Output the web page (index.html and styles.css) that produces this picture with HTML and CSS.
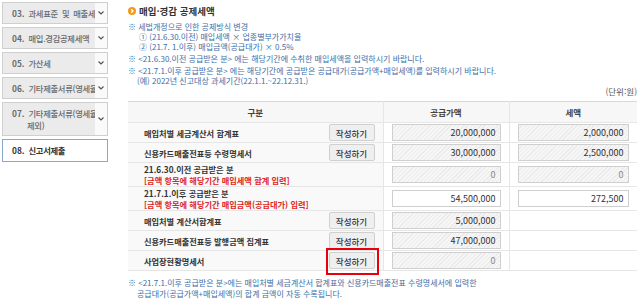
FILE: index.html
```html
<!DOCTYPE html>
<html lang="ko">
<head>
<meta charset="utf-8">
<link rel="stylesheet" href="styles.css">
</head>
<body>
<div class="page">
  <nav class="sidebar">
    <div class="step"><span class="step-label"><b>03.</b> 과세표준 및 매출세액</span><span class="step-arrow"><svg width="6" height="4" viewBox="0 0 6 4"><path d="M0.5 0.5 L3 3 L5.5 0.5" fill="none" stroke="#555" stroke-width="1.2"/></svg></span></div>
    <div class="step"><span class="step-label"><b>04.</b> 매입.경감공제세액</span><span class="step-arrow"><svg width="6" height="4" viewBox="0 0 6 4"><path d="M0.5 0.5 L3 3 L5.5 0.5" fill="none" stroke="#555" stroke-width="1.2"/></svg></span></div>
    <div class="step"><span class="step-label"><b>05.</b> 가산세</span><span class="step-arrow"><svg width="6" height="4" viewBox="0 0 6 4"><path d="M0.5 0.5 L3 3 L5.5 0.5" fill="none" stroke="#555" stroke-width="1.2"/></svg></span></div>
    <div class="step"><span class="step-label"><b>06.</b> 기타제출서류(영세율 제외)</span><span class="step-arrow"><svg width="6" height="4" viewBox="0 0 6 4"><path d="M0.5 0.5 L3 3 L5.5 0.5" fill="none" stroke="#555" stroke-width="1.2"/></svg></span></div>
    <div class="step step-tall"><span class="step-label step-wrap"><b>07.</b> 기타제출서류(영세율<br><span class="wrap-indent">제외)</span></span><span class="step-arrow"><svg width="6" height="4" viewBox="0 0 6 4"><path d="M0.5 0.5 L3 3 L5.5 0.5" fill="none" stroke="#555" stroke-width="1.2"/></svg></span></div>
    <div class="step step-active"><span class="step-label"><b>08.</b> 신고서제출</span></div>
  </nav>
  <main class="main">
    <h2 class="title"><span class="title-icon"><svg width="8" height="8" viewBox="0 0 8 8"><circle cx="4" cy="4" r="4" fill="#f39a1e"/><path d="M3.2 2.2 L5 4 L3.2 5.8" fill="none" stroke="#fff" stroke-width="1.3"/></svg></span>매입·경감 공제세액</h2>
    <div class="notes">
      <p>※ 세법개정으로 인한 공제방식 변경</p>
      <p class="indent">① (21.6.30.이전) 매입세액 × 업종별부가가치율</p>
      <p class="indent">② (21.7. 1.이후) 매입금액(공급대가) × 0.5%</p>
      <p class="gap">※ &lt;21.6.30.이전 공급받은 분&gt; 에는 해당기간에 수취한 매입세액을 입력하시기 바랍니다.</p>
      <p class="gap">※ &lt;21.7.1.이후 공급받은 분&gt; 에는 해당기간에 공급받은 공급대가(공급가액+매입세액)를 입력하시기 바랍니다.</p>
      <p class="indent-s">(예) 2022년 신고대상 과세기간(22.1.1.~22.12.31.)</p>
    </div>
    <div class="unit">(단위:원)</div>
    <table class="grid">
      <colgroup><col class="c1"><col class="c2"><col class="c3"></colgroup>
      <thead>
        <tr><th>구분</th><th>공급가액</th><th>세액</th></tr>
      </thead>
      <tbody>
        <tr>
          <td class="label"><div class="label-row"><span>매입처별 세금계산서 합계표</span><button class="btn">작성하기</button></div></td>
          <td><div class="field ro">20,000,000</div></td>
          <td><div class="field ro">2,000,000</div></td>
        </tr>
        <tr>
          <td class="label"><div class="label-row"><span>신용카드매출전표등 수령명세서</span><button class="btn">작성하기</button></div></td>
          <td><div class="field ro">30,000,000</div></td>
          <td><div class="field ro">2,500,000</div></td>
        </tr>
        <tr class="two">
          <td class="label"><div class="label-two"><span>21.6.30.이전 공급받은 분</span><span class="red">[금액 항목에 해당기간 매입세액 합계 입력]</span></div></td>
          <td><div class="field ro zero">0</div></td>
          <td><div class="field ro zero">0</div></td>
        </tr>
        <tr class="two">
          <td class="label"><div class="label-two"><span>21.7.1.이후 공급받은 분</span><span class="red">[금액 항목에 해당기간 매입금액(공급대가) 입력]</span></div></td>
          <td><div class="field">54,500,000</div></td>
          <td><div class="field">272,500</div></td>
        </tr>
        <tr>
          <td class="label"><div class="label-row"><span>매입처별 계산서합계표</span><button class="btn">작성하기</button></div></td>
          <td><div class="field ro">5,000,000</div></td>
          <td></td>
        </tr>
        <tr>
          <td class="label"><div class="label-row"><span>신용카드매출전표등 발행금액 집계표</span><button class="btn">작성하기</button></div></td>
          <td><div class="field ro">47,000,000</div></td>
          <td></td>
        </tr>
        <tr>
          <td class="label"><div class="label-row"><span>사업장현황명세서</span><button class="btn btn-marked">작성하기</button></div></td>
          <td><div class="field ro zero">0</div></td>
          <td></td>
        </tr>
      </tbody>
    </table>
    <div class="foot">
      <p>※ &lt;21.7.1.이후 공급받은 분&gt;에는 매입처별 세금계산서 합계표와 신용카드매출전표 수령명세서에 입력한</p>
      <p class="indent-s">공급대가(공급가액+매입세액)의 합계 금액이 자동 수록됩니다.</p>
    </div>
  </main>
</div>
</body>
</html>
```
FILE: styles.css
```css
* { box-sizing: border-box; }
html, body { margin: 0; padding: 0; background: #fff; }
body {
  font-family: "Noto Sans CJK KR", "Noto Sans", sans-serif;
  color: #333;
  width: 643px;
  height: 306px;
  overflow: hidden;
}
.page {
  display: flex;
  padding: 2px 6px 0 2px;
}
.sidebar {
  width: 106px;
  flex: none;
  display: flex;
  flex-direction: column;
  gap: 3px;
}
.step {
  display: flex;
  height: 22px;
  border: 1px solid #cfcfcf;
  background: #fafafa;
}
.step-label {
  flex: 1;
  min-width: 0;
  background: #ebebeb;
  color: #6a6a6a;
  font-size: 8.3px;
  font-weight: 500;
  letter-spacing: -0.3px;
  word-spacing: 2px;
  line-height: 20px;
  padding-left: 9px;
  white-space: nowrap;
  overflow: hidden;
}
.step-label b { font-weight: 700; letter-spacing: 0; }
.step-arrow {
  width: 12px;
  flex: none;
  display: flex;
  align-items: center;
  justify-content: center;
}
.step-tall { height: 34px; }
.step-wrap { line-height: 12px; padding-top: 4px; }
.wrap-indent { padding-left: 15px; }
.step-active {
  border-color: #8aa6cf;
  background: #fff;
  height: 23px;
}
.step-active .step-label { background: #fff; color: #333; font-weight: 700; }

.main {
  flex: 1;
  margin-left: 20px;
  min-width: 0;
}
.title {
  margin: 3px 0 0;
  font-size: 9.5px;
  font-weight: 700;
  color: #333;
  display: flex;
  align-items: center;
  gap: 3px;
  height: 12px;
}
.title-icon { display: flex; }
.notes { margin-top: 5px; color: #3d6ea8; font-size: 8px; line-height: 10px; }
.notes p, .foot p { margin: 0; white-space: nowrap; }
.indent { padding-left: 11px; }
.indent-s { padding-left: 9px; }
.gap { margin-top: 2px !important; }
.unit {
  text-align: right;
  font-size: 8.5px;
  color: #555;
  margin-top: 0;
  line-height: 10px;
}
.grid {
  margin-top: 5px;
  width: 509px;
  border-collapse: collapse;
  table-layout: fixed;
  border-top: 1px solid #d8d8d8;
}
.c1 { width: 255px; }
.c2 { width: 126px; }
.c3 { width: 128px; }
.grid th {
  height: 21px;
  padding: 0;
  background: #f7f7f7;
  font-size: 8.5px;
  font-weight: 700;
  color: #444;
  border-bottom: 1px solid #e6e6e6;
  border-left: 1px solid #e6e6e6;
}
.grid th:first-child { border-left: 0; }
.grid td {
  height: 20px;
  padding: 0;
  border-bottom: 1px solid #e6e6e6;
  border-left: 1px solid #e6e6e6;
  vertical-align: middle;
}
.grid td.label { border-left: 0; background: #f9f9f9; padding: 0 8px 0 16px; font-size: 8.2px; font-weight: 700; color: #333; }
.grid tr.two td { height: 24px; }
.label-row { display: flex; align-items: center; justify-content: space-between; }
.label-two { display: flex; flex-direction: column; line-height: 10.5px; }
.red { color: #e0261f; }
.btn {
  position: relative;
  width: 46px;
  height: 17px;
  padding: 0;
  border: 1px solid #d0d0d0;
  border-radius: 2px;
  background: #efefef;
  font-family: inherit;
  font-size: 8.5px;
  font-weight: 500;
  color: #333;
}
.btn-marked::after {
  content: "";
  position: absolute;
  left: -4px;
  top: -5px;
  right: -5px;
  bottom: -7px;
  border: 2px solid #e8000b;
}
.field {
  width: 109px;
  height: 17px;
  margin-left: 8px;
  border: 1px solid #cfcfcf;
  background: #fff;
  font-size: 9px;
  line-height: 15px;
  text-align: right;
  padding-right: 4px;
  color: #333;
}
.grid td:last-child .field { width: 111px; }
.field.ro {
  background: repeating-linear-gradient(135deg, #f6f6f6 0 2px, #ebebeb 2px 3px);
}
.field.zero { color: #8a8a8a; }
.foot { margin-top: 6px; color: #3d6ea8; font-size: 8px; line-height: 11px; }
```
